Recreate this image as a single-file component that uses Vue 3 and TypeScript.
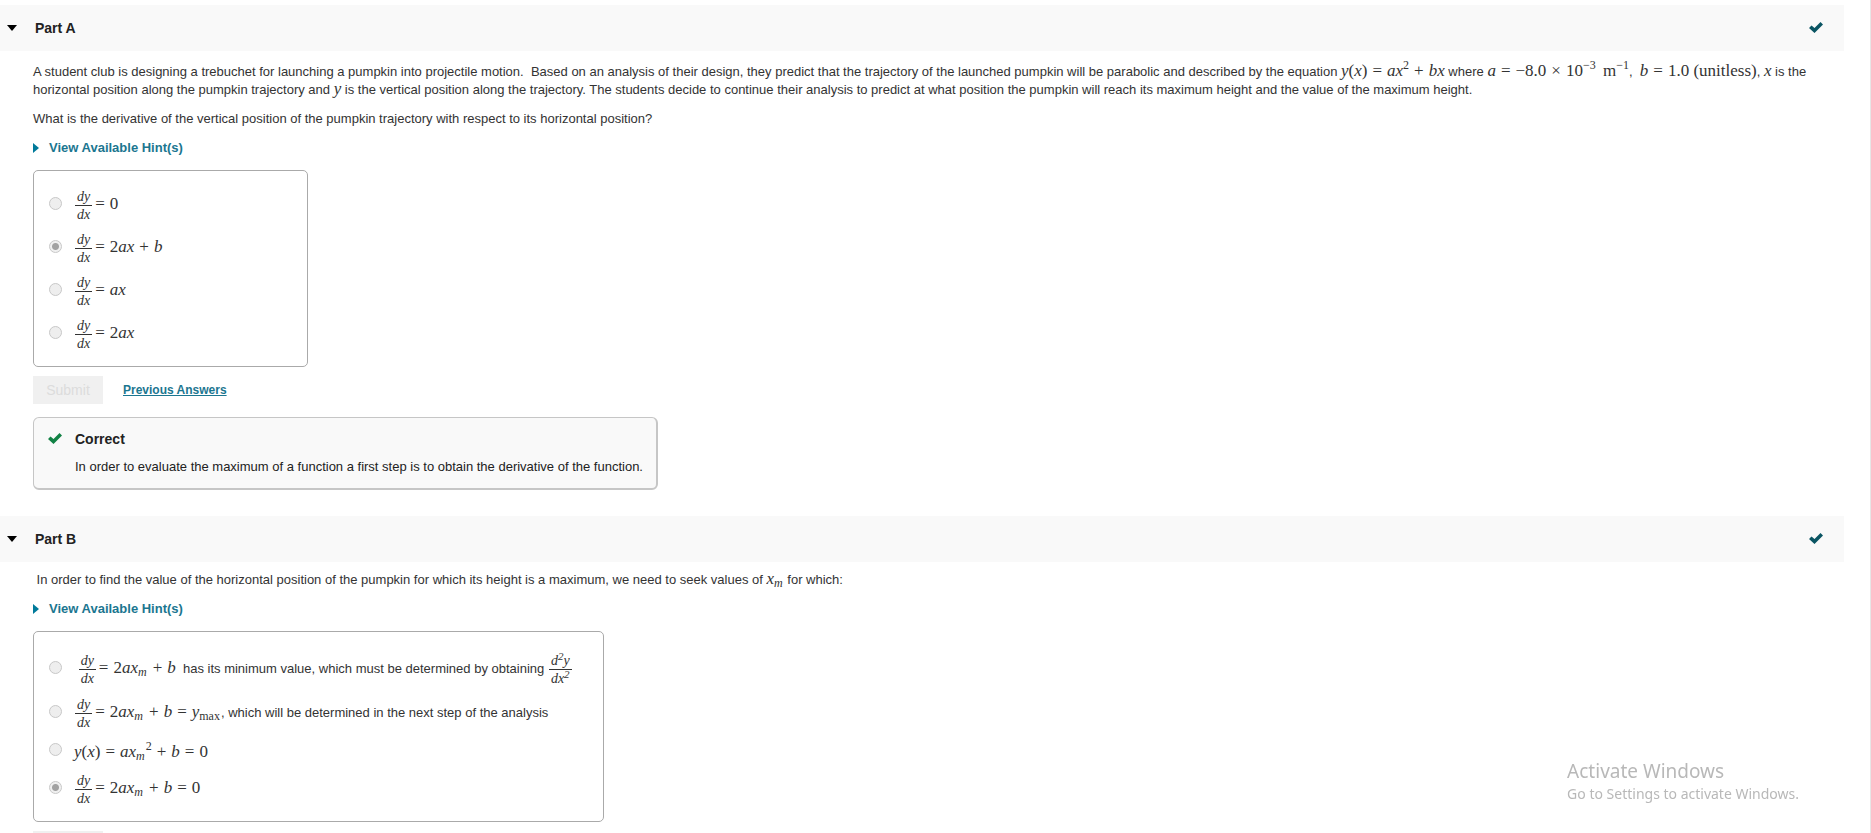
<script setup lang="ts">
import { ref } from 'vue'

const answerA = ref<string>('2ax+b')
const answerB = ref<string>('zero')
const openA = ref<boolean>(true)
const openB = ref<boolean>(true)
</script>

<template>
  <main class="page">
    <section class="part">
      <header class="bar">
        <button class="toggle" type="button" :aria-expanded="openA" @click="openA = !openA">
          <svg class="caret" viewBox="0 0 10 6" aria-hidden="true"><path d="M0 0h10L5 6z" /></svg>
          <span>Part A</span>
        </button>
        <svg class="tick" viewBox="0 0 14 12" role="img" aria-label="Completed"><path d="M0 6l2.500-2.500L5.500 6 11.500 0 14 2.500 5.500 11z" /></svg>
      </header>
      <div v-if="openA" class="body">
        <p class="text lead">A student club is designing a trebuchet for launching a pumpkin into projectile motion.&nbsp; Based on an analysis of their design, they predict that the trajectory of the launched pumpkin will be parabolic and described by the equation <span class="math"><i>y</i>(<i>x</i>)<span class="op">=</span><i>ax</i><sup>2</sup><span class="op">+</span><i>bx</i></span> where <span class="math"><i>a</i><span class="op">=</span>−8.0<span class="op">×</span>10<sup>−3</sup></span>&nbsp; <span class="math">m<sup>−1</sup></span>,&nbsp; <span class="math"><i>b</i><span class="op">=</span>1.0 (unitless)</span>, <span class="math"><i>x</i></span> is the horizontal position along the pumpkin trajectory and <span class="math"><i>y</i></span> is the vertical position along the trajectory. The students decide to continue their analysis to predict at what position the pumpkin will reach its maximum height and the value of the maximum height.</p>
        <p class="text">What is the derivative of the vertical position of the pumpkin trajectory with respect to its horizontal position?</p>
        <button class="hint" type="button">
          <svg class="arrow" viewBox="0 0 6 10" aria-hidden="true"><path d="M0 0l6 5-6 5z" /></svg>
          <span>View Available Hint(s)</span>
        </button>
        <fieldset class="choices choices-a" disabled aria-label="Part A answers">
          <label class="choice">
            <input v-model="answerA" type="radio" name="part-a" value="0">
            <span class="math"><span class="frac"><i>dy</i><i class="den">dx</i></span><span class="op">=</span>0</span>
          </label>
          <label class="choice">
            <input v-model="answerA" type="radio" name="part-a" value="2ax+b">
            <span class="math"><span class="frac"><i>dy</i><i class="den">dx</i></span><span class="op">=</span>2<i>ax</i><span class="op">+</span><i>b</i></span>
          </label>
          <label class="choice">
            <input v-model="answerA" type="radio" name="part-a" value="ax">
            <span class="math"><span class="frac"><i>dy</i><i class="den">dx</i></span><span class="op">=</span><i>ax</i></span>
          </label>
          <label class="choice">
            <input v-model="answerA" type="radio" name="part-a" value="2ax">
            <span class="math"><span class="frac"><i>dy</i><i class="den">dx</i></span><span class="op">=</span>2<i>ax</i></span>
          </label>
        </fieldset>
        <div class="actions">
          <button class="submit" type="button" disabled>Submit</button>
          <a class="previous" href="#previous">Previous Answers</a>
        </div>
        <div class="feedback">
          <svg class="tick good" viewBox="0 0 14 12" aria-hidden="true"><path d="M0 6l2.500-2.500L5.500 6 11.500 0 14 2.500 5.500 11z" /></svg>
          <div>
            <h3>Correct</h3>
            <p>In order to evaluate the maximum of a function a first step is to obtain the derivative of the function.</p>
          </div>
        </div>
      </div>
    </section>

    <section class="part">
      <header class="bar">
        <button class="toggle" type="button" :aria-expanded="openB" @click="openB = !openB">
          <svg class="caret" viewBox="0 0 10 6" aria-hidden="true"><path d="M0 0h10L5 6z" /></svg>
          <span>Part B</span>
        </button>
        <svg class="tick" viewBox="0 0 14 12" role="img" aria-label="Completed"><path d="M0 6l2.500-2.500L5.500 6 11.500 0 14 2.500 5.500 11z" /></svg>
      </header>
      <div v-if="openB" class="body">
        <p class="text">&nbsp;In order to find the value of the horizontal position of the pumpkin for which its height is a maximum, we need to seek values of <span class="math"><i>x<sub>m</sub></i></span> for which:</p>
        <button class="hint" type="button">
          <svg class="arrow" viewBox="0 0 6 10" aria-hidden="true"><path d="M0 0l6 5-6 5z" /></svg>
          <span>View Available Hint(s)</span>
        </button>
        <fieldset class="choices choices-b" disabled aria-label="Part B answers">
          <label class="choice tall">
            <input v-model="answerB" type="radio" name="part-b" value="minimum">
            <span>&nbsp;<span class="math"><span class="frac"><i>dy</i><i class="den">dx</i></span><span class="op">=</span>2<i>ax<sub>m</sub></i><span class="op">+</span><i>b</i></span>&nbsp; has its minimum value, which must be determined by obtaining <span class="math"><span class="frac"><i>d<sup>2</sup>y</i><i class="den">dx<sup>2</sup></i></span></span></span>
          </label>
          <label class="choice">
            <input v-model="answerB" type="radio" name="part-b" value="ymax">
            <span><span class="math"><span class="frac"><i>dy</i><i class="den">dx</i></span><span class="op">=</span>2<i>ax<sub>m</sub></i><span class="op">+</span><i>b</i><span class="op">=</span><i>y</i><sub>max</sub></span>, which will be determined in the next step of the analysis</span>
          </label>
          <label class="choice short">
            <input v-model="answerB" type="radio" name="part-b" value="function">
            <span class="math"><i>y</i>(<i>x</i>)<span class="op">=</span><i>ax<sub>m</sub></i><sup>2</sup><span class="op">+</span><i>b</i><span class="op">=</span>0</span>
          </label>
          <label class="choice">
            <input v-model="answerB" type="radio" name="part-b" value="zero">
            <span class="math"><span class="frac"><i>dy</i><i class="den">dx</i></span><span class="op">=</span>2<i>ax<sub>m</sub></i><span class="op">+</span><i>b</i><span class="op">=</span>0</span>
          </label>
        </fieldset>
        <div class="actions">
          <button class="submit" type="button" disabled aria-label="Submit Part B"></button>
        </div>
      </div>
    </section>

    <aside class="watermark">
      <strong>Activate Windows</strong>
      <span>Go to Settings to activate Windows.</span>
    </aside>
  </main>
</template>

<style>
body {
  background: #fff;
}
</style>

<style scoped>
.page {
  box-sizing: border-box;
  height: 100vh;
  padding: 5px 26px 0 0;
  overflow-y: auto;
  scrollbar-width: none;
  border-right: 1px solid #e6e6e6;
  font: 13px/18px "Liberation Sans", Arial, sans-serif;
  color: #333;
}

.bar {
  display: flex;
  align-items: center;
  justify-content: space-between;
  height: 46px;
  padding: 0 21px 0 7px;
  background: #f9f9f9;
}

button {
  padding: 0;
  border: 0;
  background: none;
  font: inherit;
  color: inherit;
}

.toggle {
  display: flex;
  align-items: center;
  gap: 18px;
  font-size: 14px;
  font-weight: bold;
  color: #222;
}

.caret {
  width: 10px;
  height: 6px;
}

.tick {
  width: 14px;
  height: 12px;
  fill: #0b5563;
}

.body {
  padding: 9px 20px 26px 33px;
}

.text {
  margin: 0 0 11px;
}

.lead {
  padding-top: 3px;
}

.hint {
  display: flex;
  align-items: center;
  gap: 10px;
  margin-bottom: 13px;
  font-weight: bold;
  color: #1b7690;
}

.arrow {
  width: 6px;
  height: 10px;
  fill: #007a9a;
}

.choices {
  box-sizing: border-box;
  display: flex;
  flex-direction: column;
  width: fit-content;
  margin: 0;
  border: 1px solid #aaa;
  border-radius: 5px;
}

.choices-a {
  min-width: 275px;
  padding: 13px 15px 10px;
}

.choices-b {
  padding: 14px 31px 10px 15px;
}

.choice {
  display: flex;
  align-items: center;
  gap: 12px;
  height: 43px;
}

.tall {
  height: 46px;
}

.short {
  height: 33px;
}

input {
  appearance: none;
  flex: none;
  width: 13px;
  height: 13px;
  margin: 0 0 4px;
  border: 1px solid #c8c8c8;
  border-radius: 50%;
  background: #eee;
}

input:checked {
  background: radial-gradient(circle, #a2a2a2 0 3px, #f0f0f0 4px);
}

.math {
  font-family: "Liberation Serif", "Times New Roman", serif;
  font-size: 17px;
  line-height: 0;
  white-space: nowrap;
}

.choice > .math {
  line-height: 18px;
}

.op {
  margin: 0 5px;
}

.frac {
  display: inline-flex;
  flex-direction: column;
  align-items: center;
  margin-left: 1px;
  vertical-align: middle;
  font-size: 14px;
  line-height: 17px;
}

.frac i {
  padding: 0 2px;
}

.frac .den {
  border-top: 1px solid #333;
}

.frac + .op {
  margin-left: 3px;
}

sub,
sup {
  font-size: 12px;
  line-height: 0;
}

sub {
  margin-right: 1px;
  vertical-align: -3px;
}

.frac sup {
  font-size: 11px;
  vertical-align: 5px;
}

.actions {
  display: flex;
  align-items: center;
  gap: 20px;
  margin: 9px 0 13px;
}

.submit {
  width: 70px;
  height: 28px;
  background: #f0f0f0;
  font-size: 14px;
  color: #dcdcdc;
}

.previous {
  font-size: 12px;
  font-weight: bold;
  color: #1b7690;
}

.feedback {
  box-sizing: border-box;
  display: flex;
  gap: 13px;
  width: fit-content;
  padding: 12px 13px 12px 14px;
  border: 1px solid #c6c6c6;
  border-right-width: 2px;
  border-bottom-width: 2px;
  border-radius: 6px;
  background: #f9f9f9;
  color: #222;
}

.feedback h3 {
  margin: 0 0 10px;
  font-size: 14px;
}

.feedback p {
  margin: 0;
}

.good {
  margin-top: 3px;
  fill: #128245;
}

.watermark {
  position: fixed;
  right: 72px;
  bottom: 29px;
  display: flex;
  flex-direction: column;
  font-family: "Noto Sans", "Open Sans", sans-serif;
  font-size: 14px;
  line-height: 20px;
  color: #b8b8b8;
}

.watermark strong {
  font-size: 19px;
  font-weight: 400;
  line-height: 26px;
}
</style>
